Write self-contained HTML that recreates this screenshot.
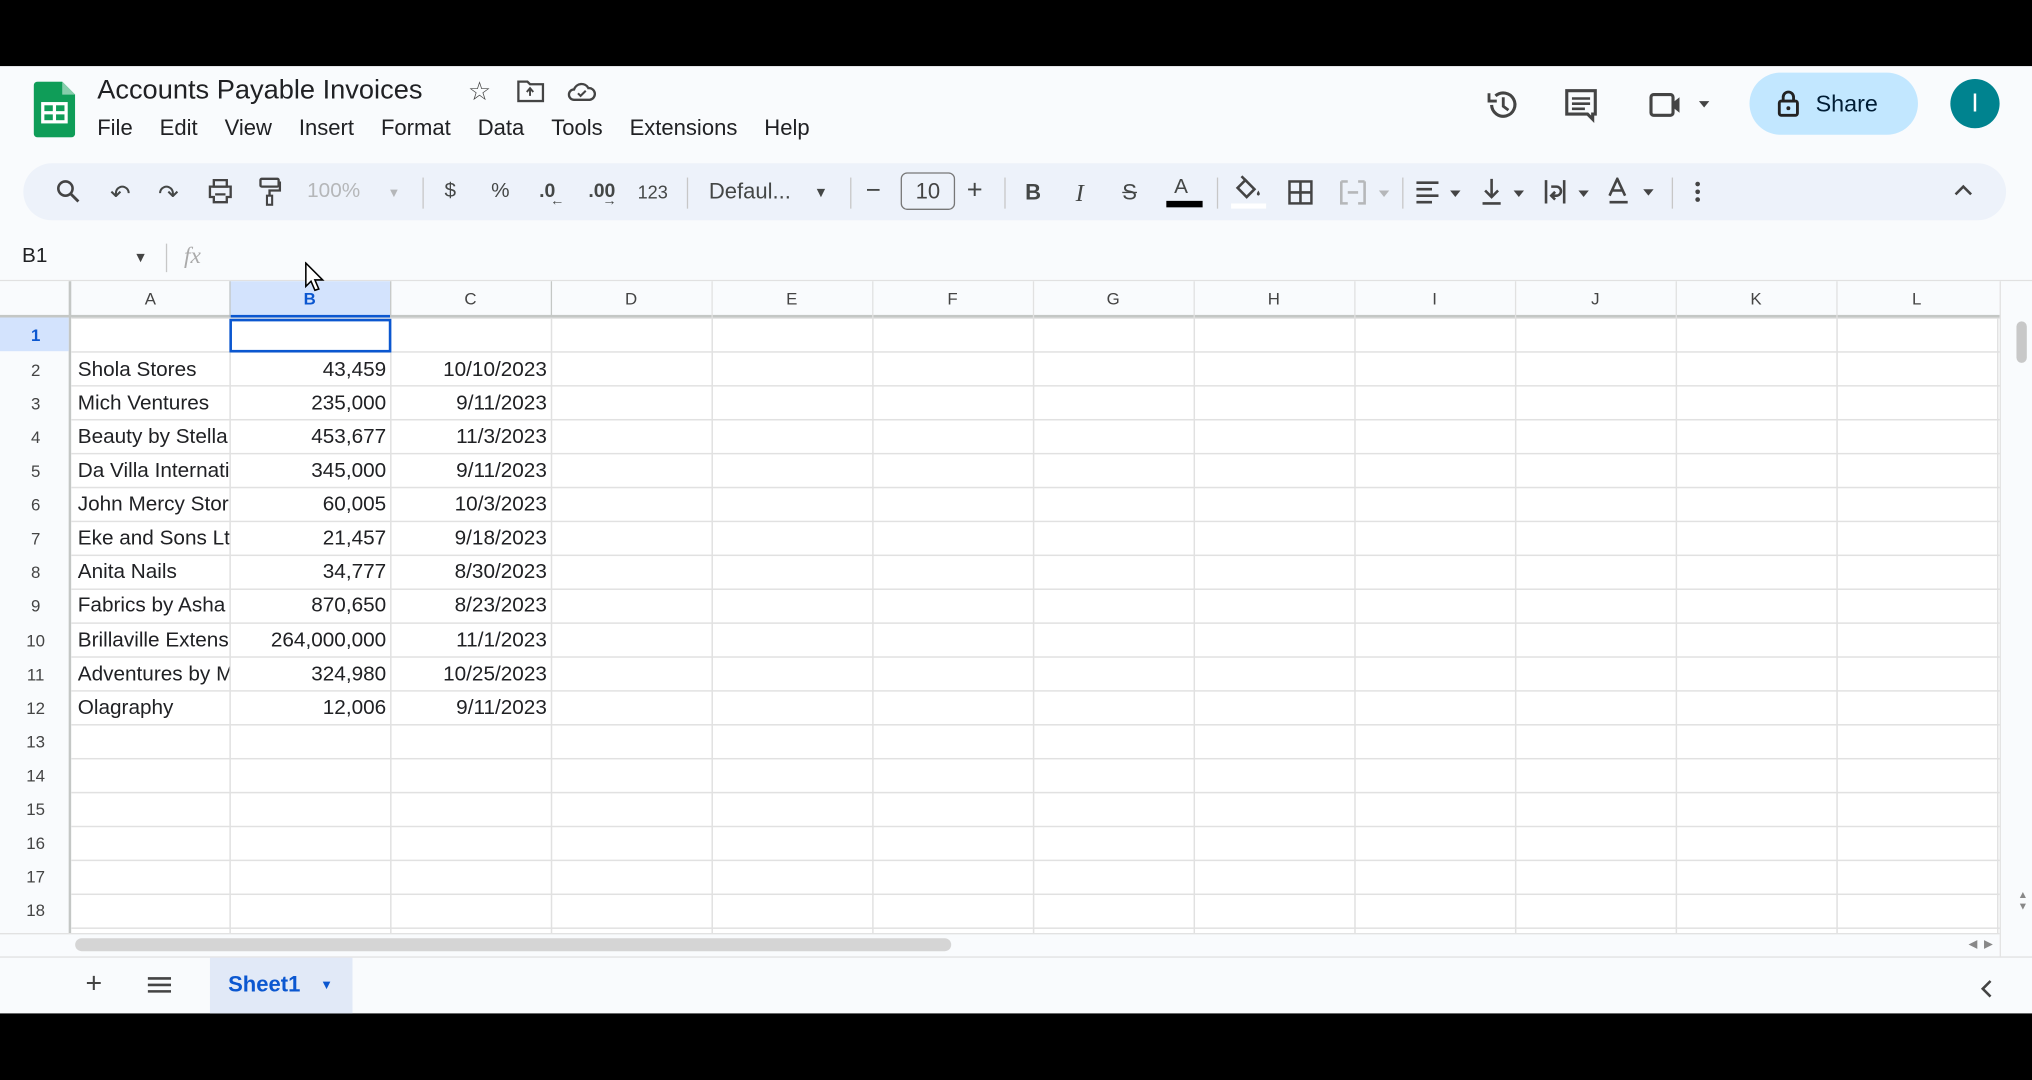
<!DOCTYPE html>
<html><head><meta charset="utf-8"><style>
*{margin:0;padding:0;box-sizing:border-box}
html,body{width:2032px;height:1080px;overflow:hidden;background:#000}
#w{position:absolute;left:0;top:0;width:1568px;height:833px;transform:scale(1.29592);transform-origin:0 0;background:#000;font-family:"Liberation Sans",sans-serif;color:#202124}
.a{position:absolute}
#app{position:absolute;left:0;top:51px;width:1568px;height:731px;background:#f9fbfd}
.menu span{margin-right:20.8px}
.tb{position:absolute;top:139px;font-size:16px;color:#444746}
.sep{position:absolute;top:137px;width:1px;height:24px;background:#c7c7c7}
#grid{position:absolute;left:55px;top:245px;width:1488px;height:475px;background:#fff;
background-image:linear-gradient(90deg,#e1e1e1 1px,transparent 1px),linear-gradient(#e1e1e1 1px,transparent 1px);
background-size:124px 26.17px;background-position:122px 0,0 26px}
.rh{position:absolute;left:0;width:55px;text-align:center;font-size:13px;color:#444}
.ch{position:absolute;top:217px;width:124px;text-align:center;font-size:13px;color:#444;line-height:28px}
.c{position:absolute;font-size:16px;line-height:26px;white-space:nowrap;overflow:hidden}
</style></head><body><div id="w">
<div id="app"></div>
<svg class="a" style="left:26px;top:63px" width="32" height="43" viewBox="0 0 32 43"><path d="M3 0h19l10 10v30a3 3 0 0 1-3 3H3a3 3 0 0 1-3-3V3a3 3 0 0 1 3-3z" fill="#0f9d58"/><path d="M22 0v10h10z" fill="#87ceac"/><rect x="7" y="17" width="18" height="14" fill="none" stroke="#fff" stroke-width="2.5"/><path d="M7 24h18M16 17v14" stroke="#fff" stroke-width="2.5"/></svg>
<div class="a" style="left:75px;top:58px;font-size:21px">Accounts Payable Invoices</div>
<div class="a" style="left:361px;top:58px;font-size:20px;color:#444">☆</div>
<svg class="a" style="left:399px;top:61px" width="21" height="18" viewBox="0 0 21 18"><path d="M1 2h7l2 2h10v13H1z" fill="none" stroke="#444" stroke-width="1.8"/><path d="M10 7v6M7.5 10l2.5-3 2.5 3" stroke="#444" stroke-width="1.5" fill="none"/></svg>
<svg class="a" style="left:438px;top:62px" width="22" height="16" viewBox="0 0 22 16"><path d="M5 15a4 4 0 0 1 0-8 6 6 0 0 1 11-1 4.5 4.5 0 0 1 1 9z" fill="none" stroke="#444" stroke-width="1.8"/><path d="M8 10l2 2 4-4" stroke="#444" stroke-width="1.6" fill="none"/></svg>
<div class="a menu" style="left:75px;top:89px;font-size:17px"><span>File</span><span>Edit</span><span>View</span><span>Insert</span><span>Format</span><span>Data</span><span>Tools</span><span>Extensions</span><span>Help</span></div>
<svg class="a" style="left:1146px;top:67px" width="28" height="28" viewBox="0 0 28 28"><path d="M5 14a9 9 0 1 0 3-7" fill="none" stroke="#444" stroke-width="2.4"/><path d="M3 5v6h6" fill="none" stroke="#444" stroke-width="2.2"/><path d="M14 8v7l4 3" fill="none" stroke="#444" stroke-width="2.2"/></svg>
<svg class="a" style="left:1207px;top:68px" width="27" height="27" viewBox="0 0 27 27"><path d="M2 2h22v18h-2v4l-4-4H2z" fill="none" stroke="#444" stroke-width="2.4"/><path d="M6 8h14M6 12h14M6 16h10" stroke="#444" stroke-width="2"/></svg>
<svg class="a" style="left:1272px;top:70px" width="52" height="22" viewBox="0 0 52 22"><rect x="2" y="3" width="17" height="16" rx="2" fill="none" stroke="#444" stroke-width="2.4"/><path d="M19 9l5-4v12l-5-4" fill="#444"/><path d="M39 8h8l-4 5z" fill="#444"/></svg>
<div class="a" style="left:1350px;top:56px;width:130px;height:48px;border-radius:24px;background:#c2e7ff"></div>
<svg class="a" style="left:1371px;top:69px" width="18" height="22" viewBox="0 0 18 22"><rect x="2" y="9" width="14" height="11" rx="1.5" fill="none" stroke="#222" stroke-width="2.2"/><path d="M5 9V6a4 4 0 0 1 8 0v3" fill="none" stroke="#222" stroke-width="2.2"/><circle cx="9" cy="14.5" r="1.5" fill="#222"/></svg>
<div class="a" style="left:1401px;top:70px;font-size:18px;color:#001d35">Share</div>
<div class="a" style="left:1505px;top:61px;width:38px;height:38px;border-radius:50%;background:#00838f;color:#fff;text-align:center;font-size:20px;line-height:38px">I</div>
<div class="a" style="left:18px;top:126px;width:1530px;height:44px;border-radius:22px;background:#edf2fa"></div>
<svg class="a" style="left:43px;top:138px" width="19" height="19" viewBox="0 0 19 19"><circle cx="7.5" cy="7.5" r="5.5" fill="none" stroke="#444" stroke-width="2"/><path d="M11.5 11.5l6 6" stroke="#444" stroke-width="2.2"/></svg>
<div class="tb" style="left:85px;top:139px;font-size:19px">↶</div>
<div class="tb" style="left:122px;top:139px;font-size:19px">↷</div>
<svg class="a" style="left:160px;top:138px" width="20" height="19" viewBox="0 0 20 19"><path d="M5 1h10v5H5z" fill="none" stroke="#444" stroke-width="1.8"/><path d="M2 6h16v8h-3v4H5v-4H2z" fill="none" stroke="#444" stroke-width="1.8"/><path d="M6 12h8" stroke="#444" stroke-width="1.8"/></svg>
<svg class="a" style="left:199px;top:137px" width="18" height="22" viewBox="0 0 18 22"><rect x="2" y="1" width="14" height="6" rx="1" fill="none" stroke="#444" stroke-width="1.8"/><path d="M16 4h1v6H9v4" fill="none" stroke="#444" stroke-width="1.8"/><rect x="7" y="14" width="4" height="7" fill="none" stroke="#444" stroke-width="1.6"/></svg>
<div class="tb" style="left:237px;color:#b5b7b9">100%</div><div class="tb" style="left:299px;color:#b5b7b9;font-size:10px;top:144px">▼</div>
<div class="sep" style="left:326px"></div>
<div class="tb" style="left:343px">$</div>
<div class="tb" style="left:379px">%</div>
<div class="tb" style="left:416px;font-weight:bold;font-size:15px">.0<span style="font-size:11px;position:relative;top:6px;left:-4px">←</span></div>
<div class="tb" style="left:454px;font-weight:bold;font-size:15px">.00<span style="font-size:11px;position:relative;top:6px;left:-10px">→</span></div>
<div class="tb" style="left:492px;font-size:14px;top:140px">123</div>
<div class="sep" style="left:530px"></div>
<div class="tb" style="left:547px;font-size:17px;top:138px">Defaul...</div><div class="tb" style="left:628px;font-size:11px;top:143px">▼</div>
<div class="sep" style="left:656px"></div>
<div class="tb" style="left:668px;font-size:20px;top:136px">−</div>
<div class="a" style="left:695px;top:133px;width:42px;height:29px;border:1px solid #777;border-radius:5px;text-align:center;line-height:27px;font-size:17px;color:#444">10</div>
<div class="tb" style="left:746px;font-size:21px;top:135px">+</div>
<div class="sep" style="left:775px"></div>
<div class="tb" style="left:791px;font-weight:bold;font-size:17px">B</div>
<div class="tb" style="left:830px;font-style:italic;font-size:19px;font-family:'Liberation Serif'">I</div>
<div class="tb" style="left:866px;font-size:17px;text-decoration:line-through">S</div>
<div class="tb" style="left:906px;font-size:16px;top:136px">A</div><div class="a" style="left:900px;top:155px;width:28px;height:5px;background:#000"></div>
<div class="sep" style="left:939px"></div>
<svg class="a" style="left:951px;top:134px" width="24" height="24" viewBox="0 0 24 24"><path d="M4 11l6-6 7 7-6 6z" fill="none" stroke="#444" stroke-width="2"/><path d="M7 2l4 4" stroke="#444" stroke-width="2"/><path d="M20 13c1 2 2 3 0 4-2-1-1-2 0-4z" fill="#444"/></svg>
<div class="a" style="left:950px;top:157px;width:27px;height:4px;background:#fff"></div>
<svg class="a" style="left:994px;top:139px" width="19" height="19" viewBox="0 0 19 19"><rect x="1" y="1" width="17" height="17" fill="none" stroke="#444" stroke-width="2"/><path d="M9.5 1v17M1 9.5h17" stroke="#444" stroke-width="2"/></svg>
<svg class="a" style="left:1034px;top:139px" width="40" height="19" viewBox="0 0 40 19"><path d="M1 1h5M1 1v17h5M19 1h-5M19 1v17h-5M6 9.5h8" fill="none" stroke="#b5b7b9" stroke-width="2"/><path d="M30 8h8l-4 5z" fill="#b5b7b9"/></svg>
<div class="sep" style="left:1082px"></div>
<svg class="a" style="left:1092px;top:139px" width="38" height="19" viewBox="0 0 38 19"><path d="M1 2h17M1 7h12M1 12h17M1 17h12" stroke="#444" stroke-width="2"/><path d="M27 8h8l-4 5z" fill="#444"/></svg>
<svg class="a" style="left:1142px;top:137px" width="38" height="22" viewBox="0 0 38 22"><path d="M9 1v14M4 10l5 5 5-5M2 20h14" fill="none" stroke="#444" stroke-width="2"/><path d="M26 10h8l-4 5z" fill="#444"/></svg>
<svg class="a" style="left:1191px;top:138px" width="38" height="20" viewBox="0 0 38 20"><path d="M2 1v18M16 1v18M6 6h4a3 3 0 0 1 0 7H7M9 10l-3 3 3 3" fill="none" stroke="#444" stroke-width="2"/><path d="M27 9h8l-4 5z" fill="#444"/></svg>
<svg class="a" style="left:1240px;top:137px" width="40" height="22" viewBox="0 0 40 22"><path d="M2 14l6-13 6 13M4 10h8M2 19h14" fill="none" stroke="#444" stroke-width="2"/><path d="M28 9h8l-4 5z" fill="#444"/></svg>
<div class="sep" style="left:1290px"></div>
<svg class="a" style="left:1307px;top:139px" width="6" height="18" viewBox="0 0 6 18"><circle cx="3" cy="3" r="1.8" fill="#444"/><circle cx="3" cy="9" r="1.8" fill="#444"/><circle cx="3" cy="15" r="1.8" fill="#444"/></svg>
<svg class="a" style="left:1508px;top:142px" width="14" height="10" viewBox="0 0 14 10"><path d="M1 8l6-6 6 6" fill="none" stroke="#444" stroke-width="2"/></svg>
<div class="a" style="left:17px;top:189px;font-size:16px">B1</div>
<div class="a" style="left:103px;top:193px;font-size:11px;color:#444">▼</div>
<div class="a" style="left:128px;top:188px;width:1px;height:22px;background:#c7c7c7"></div>
<div class="a" style="left:142px;top:187px;font-size:18px;font-style:italic;color:#aaa;font-family:'Liberation Serif'">fx</div>
<div class="a" style="left:0;top:216px;width:1568px;height:1px;background:#e1e1e1"></div>
<div class="a" style="left:0;top:217px;width:1543px;height:28px;background:#f9fbfd;border-bottom:2px solid #c4c7c5"></div>
<div class="a" style="left:177px;top:217px;width:124px;height:28px;background:#d3e3fd;border-bottom:2px solid #0b57d0"></div>
<div class="a" style="left:53px;top:217px;width:2px;height:503px;background:#c4c7c5"></div>
<div class="ch" style="left:55px;width:122px">A</div>
<div class="ch" style="left:177px;font-weight:bold;color:#0b57d0">B</div>
<div class="ch" style="left:301px">C</div><div class="ch" style="left:425px">D</div><div class="ch" style="left:549px">E</div><div class="ch" style="left:673px">F</div><div class="ch" style="left:797px">G</div><div class="ch" style="left:921px">H</div><div class="ch" style="left:1045px">I</div><div class="ch" style="left:1169px">J</div><div class="ch" style="left:1293px">K</div><div class="ch" style="left:1417px">L</div>
<div class="a" style="left:177px;top:217px;width:1px;height:28px;background:#c4c7c5"></div>
<div class="a" style="left:301px;top:217px;width:1px;height:28px;background:#c4c7c5"></div>
<div class="a" style="left:425px;top:217px;width:1px;height:28px;background:#c4c7c5"></div>
<div class="a" style="left:549px;top:217px;width:1px;height:28px;background:#e1e1e1"></div>
<div class="a" style="left:673px;top:217px;width:1px;height:28px;background:#e1e1e1"></div>
<div class="a" style="left:797px;top:217px;width:1px;height:28px;background:#e1e1e1"></div>
<div class="a" style="left:921px;top:217px;width:1px;height:28px;background:#e1e1e1"></div>
<div class="a" style="left:1045px;top:217px;width:1px;height:28px;background:#e1e1e1"></div>
<div class="a" style="left:1169px;top:217px;width:1px;height:28px;background:#e1e1e1"></div>
<div class="a" style="left:1293px;top:217px;width:1px;height:28px;background:#e1e1e1"></div>
<div class="a" style="left:1417px;top:217px;width:1px;height:28px;background:#e1e1e1"></div>
<div id="grid"></div>
<div class="a" style="left:0;top:245px;width:53px;height:26px;background:#d3e3fd"></div>
<div class="rh" style="top:251px;font-weight:bold;color:#0b57d0">1</div>
<div class="rh" style="top:278px">2</div><div class="rh" style="top:304px">3</div><div class="rh" style="top:330px">4</div><div class="rh" style="top:356px">5</div><div class="rh" style="top:382px">6</div><div class="rh" style="top:408px">7</div><div class="rh" style="top:434px">8</div><div class="rh" style="top:460px">9</div><div class="rh" style="top:487px">10</div><div class="rh" style="top:513px">11</div><div class="rh" style="top:539px">12</div><div class="rh" style="top:565px">13</div><div class="rh" style="top:591px">14</div><div class="rh" style="top:617px">15</div><div class="rh" style="top:643px">16</div><div class="rh" style="top:669px">17</div><div class="rh" style="top:695px">18</div>
<div class="a" style="left:177px;top:246px;width:125px;height:26px;border:2px solid #0b57d0;background:#fff"></div>
<div class="c" style="left:60px;top:273px;width:117px">Shola Stores</div>
<div class="c" style="left:60px;top:299px;width:117px">Mich Ventures</div>
<div class="c" style="left:60px;top:325px;width:117px">Beauty by Stella</div>
<div class="c" style="left:60px;top:351px;width:117px">Da Villa International</div>
<div class="c" style="left:60px;top:377px;width:117px">John Mercy Stores</div>
<div class="c" style="left:60px;top:403px;width:117px">Eke and Sons Ltd</div>
<div class="c" style="left:60px;top:429px;width:117px">Anita Nails</div>
<div class="c" style="left:60px;top:455px;width:117px">Fabrics by Asha</div>
<div class="c" style="left:60px;top:482px;width:117px">Brillaville Extensions</div>
<div class="c" style="left:60px;top:508px;width:117px">Adventures by Mike</div>
<div class="c" style="left:60px;top:534px;width:117px">Olagraphy</div>
<div class="c" style="left:177px;top:273px;width:121px;text-align:right">43,459</div>
<div class="c" style="left:177px;top:299px;width:121px;text-align:right">235,000</div>
<div class="c" style="left:177px;top:325px;width:121px;text-align:right">453,677</div>
<div class="c" style="left:177px;top:351px;width:121px;text-align:right">345,000</div>
<div class="c" style="left:177px;top:377px;width:121px;text-align:right">60,005</div>
<div class="c" style="left:177px;top:403px;width:121px;text-align:right">21,457</div>
<div class="c" style="left:177px;top:429px;width:121px;text-align:right">34,777</div>
<div class="c" style="left:177px;top:455px;width:121px;text-align:right">870,650</div>
<div class="c" style="left:177px;top:482px;width:121px;text-align:right">264,000,000</div>
<div class="c" style="left:177px;top:508px;width:121px;text-align:right">324,980</div>
<div class="c" style="left:177px;top:534px;width:121px;text-align:right">12,006</div>
<div class="c" style="left:301px;top:273px;width:121px;text-align:right">10/10/2023</div>
<div class="c" style="left:301px;top:299px;width:121px;text-align:right">9/11/2023</div>
<div class="c" style="left:301px;top:325px;width:121px;text-align:right">11/3/2023</div>
<div class="c" style="left:301px;top:351px;width:121px;text-align:right">9/11/2023</div>
<div class="c" style="left:301px;top:377px;width:121px;text-align:right">10/3/2023</div>
<div class="c" style="left:301px;top:403px;width:121px;text-align:right">9/18/2023</div>
<div class="c" style="left:301px;top:429px;width:121px;text-align:right">8/30/2023</div>
<div class="c" style="left:301px;top:455px;width:121px;text-align:right">8/23/2023</div>
<div class="c" style="left:301px;top:482px;width:121px;text-align:right">11/1/2023</div>
<div class="c" style="left:301px;top:508px;width:121px;text-align:right">10/25/2023</div>
<div class="c" style="left:301px;top:534px;width:121px;text-align:right">9/11/2023</div>
<svg class="a" style="left:235px;top:202px" width="16" height="24" viewBox="0 0 16 24"><path d="M1 1v18l4-4 3 7 3-1-3-7h6z" fill="#fff" stroke="#000" stroke-width="1.2"/></svg>
<div class="a" style="left:1543px;top:217px;width:25px;height:521px;background:#f9fbfd;border-left:1px solid #e1e1e1"></div>
<div class="a" style="left:1556px;top:248px;width:8px;height:32px;border-radius:4px;background:#c8c8c8"></div>
<div class="a" style="left:1557px;top:686px;font-size:8px;color:#888">▲<br>▼</div>
<div class="a" style="left:0;top:720px;width:1543px;height:18px;background:#f9fbfd;border-top:1px solid #e1e1e1"></div>
<div class="a" style="left:58px;top:724px;width:676px;height:10px;border-radius:5px;background:#d5d5d5"></div>
<div class="a" style="left:1519px;top:723px;font-size:9px;color:#888">◀ &nbsp;▶</div>
<div class="a" style="left:0;top:738px;width:1568px;height:1px;background:#e1e1e1"></div>
<div class="a" style="left:66px;top:746px;font-size:22px;color:#444">+</div>
<svg class="a" style="left:114px;top:753px" width="18" height="14" viewBox="0 0 18 14"><path d="M0 2h18M0 7h18M0 12h18" stroke="#444" stroke-width="2"/></svg>
<div class="a" style="left:162px;top:739px;width:110px;height:43px;background:#e1e9f7"></div>
<div class="a" style="left:176px;top:750px;font-size:17px;font-weight:bold;color:#0b57d0">Sheet1</div>
<div class="a" style="left:247px;top:755px;font-size:10px;color:#0b57d0">▼</div>
<svg class="a" style="left:1528px;top:756px" width="10" height="14" viewBox="0 0 10 14"><path d="M8 1L2 7l6 6" fill="none" stroke="#444" stroke-width="2"/></svg>
</div></body></html>
